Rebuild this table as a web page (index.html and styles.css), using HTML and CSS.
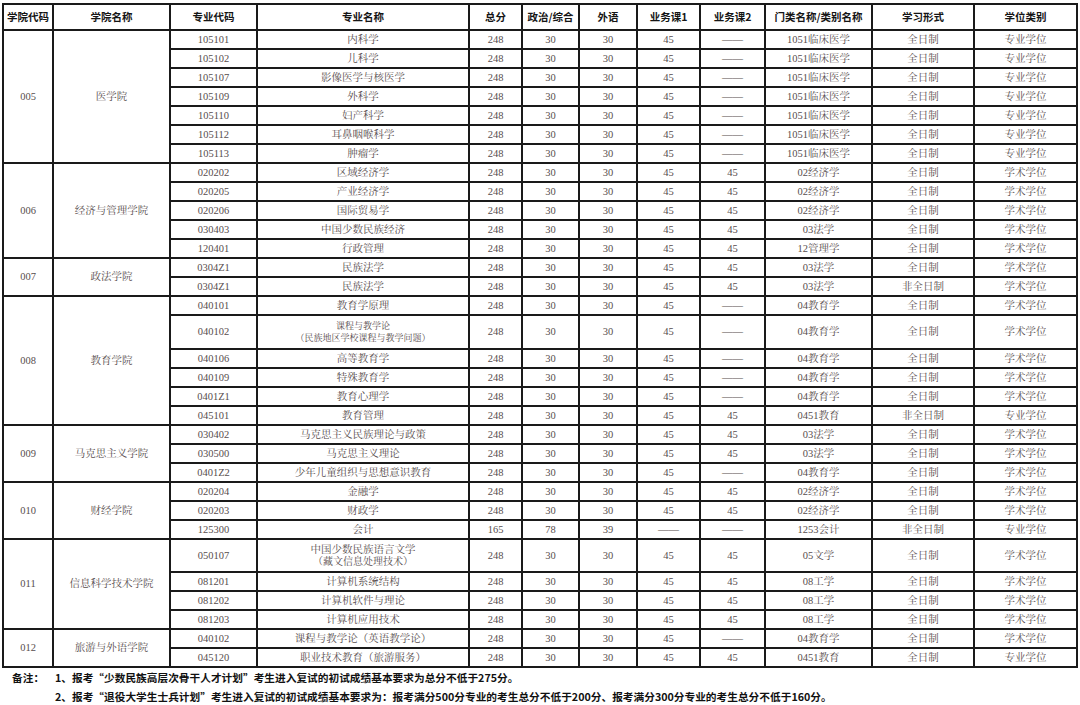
FILE: index.html
```html
<!DOCTYPE html>
<html lang="zh-CN">
<head>
<meta charset="utf-8">
<title>复试基本要求</title>
<link rel="stylesheet" href="styles.css">
</head>
<body>
<div class="page">
<table class="grid">
<colgroup>
<col class="c1"><col class="c2"><col class="c3"><col class="c4"><col class="c5"><col class="c6"><col class="c7"><col class="c8"><col class="c9"><col class="c10"><col class="c11"><col class="c12">
</colgroup>
<thead>
<tr><th>学院代码</th><th>学院名称</th><th>专业代码</th><th>专业名称</th><th>总分</th><th>政治/综合</th><th>外语</th><th>业务课1</th><th>业务课2</th><th>门类名称/类别名称</th><th>学习形式</th><th>学位类别</th></tr>
</thead>
<tbody>
<tr><td rowspan="7">005</td><td rowspan="7">医学院</td><td>105101</td><td>内科学</td><td>248</td><td>30</td><td>30</td><td>45</td><td>——</td><td>1051临床医学</td><td>全日制</td><td>专业学位</td></tr>
<tr><td>105102</td><td>儿科学</td><td>248</td><td>30</td><td>30</td><td>45</td><td>——</td><td>1051临床医学</td><td>全日制</td><td>专业学位</td></tr>
<tr><td>105107</td><td>影像医学与核医学</td><td>248</td><td>30</td><td>30</td><td>45</td><td>——</td><td>1051临床医学</td><td>全日制</td><td>专业学位</td></tr>
<tr><td>105109</td><td>外科学</td><td>248</td><td>30</td><td>30</td><td>45</td><td>——</td><td>1051临床医学</td><td>全日制</td><td>专业学位</td></tr>
<tr><td>105110</td><td>妇产科学</td><td>248</td><td>30</td><td>30</td><td>45</td><td>——</td><td>1051临床医学</td><td>全日制</td><td>专业学位</td></tr>
<tr><td>105112</td><td>耳鼻咽喉科学</td><td>248</td><td>30</td><td>30</td><td>45</td><td>——</td><td>1051临床医学</td><td>全日制</td><td>专业学位</td></tr>
<tr><td>105113</td><td>肿瘤学</td><td>248</td><td>30</td><td>30</td><td>45</td><td>——</td><td>1051临床医学</td><td>全日制</td><td>专业学位</td></tr>

<tr><td rowspan="5">006</td><td rowspan="5">经济与管理学院</td><td>020202</td><td>区域经济学</td><td>248</td><td>30</td><td>30</td><td>45</td><td>45</td><td>02经济学</td><td>全日制</td><td>学术学位</td></tr>
<tr><td>020205</td><td>产业经济学</td><td>248</td><td>30</td><td>30</td><td>45</td><td>45</td><td>02经济学</td><td>全日制</td><td>学术学位</td></tr>
<tr><td>020206</td><td>国际贸易学</td><td>248</td><td>30</td><td>30</td><td>45</td><td>45</td><td>02经济学</td><td>全日制</td><td>学术学位</td></tr>
<tr><td>030403</td><td>中国少数民族经济</td><td>248</td><td>30</td><td>30</td><td>45</td><td>45</td><td>03法学</td><td>全日制</td><td>学术学位</td></tr>
<tr><td>120401</td><td>行政管理</td><td>248</td><td>30</td><td>30</td><td>45</td><td>45</td><td>12管理学</td><td>全日制</td><td>学术学位</td></tr>

<tr><td rowspan="2">007</td><td rowspan="2">政法学院</td><td>0304Z1</td><td>民族法学</td><td>248</td><td>30</td><td>30</td><td>45</td><td>45</td><td>03法学</td><td>全日制</td><td>学术学位</td></tr>
<tr><td>0304Z1</td><td>民族法学</td><td>248</td><td>30</td><td>30</td><td>45</td><td>45</td><td>03法学</td><td>非全日制</td><td>学术学位</td></tr>

<tr><td rowspan="6">008</td><td rowspan="6">教育学院</td><td>040101</td><td>教育学原理</td><td>248</td><td>30</td><td>30</td><td>45</td><td>——</td><td>04教育学</td><td>全日制</td><td>学术学位</td></tr>
<tr class="tall-a"><td>040102</td><td class="small"><span class="line">课程与教学论</span><span class="line">（民族地区学校课程与教学问题）</span></td><td>248</td><td>30</td><td>30</td><td>45</td><td>——</td><td>04教育学</td><td>全日制</td><td>学术学位</td></tr>
<tr><td>040106</td><td>高等教育学</td><td>248</td><td>30</td><td>30</td><td>45</td><td>——</td><td>04教育学</td><td>全日制</td><td>学术学位</td></tr>
<tr><td>040109</td><td>特殊教育学</td><td>248</td><td>30</td><td>30</td><td>45</td><td>——</td><td>04教育学</td><td>全日制</td><td>学术学位</td></tr>
<tr><td>0401Z1</td><td>教育心理学</td><td>248</td><td>30</td><td>30</td><td>45</td><td>——</td><td>04教育学</td><td>全日制</td><td>学术学位</td></tr>
<tr><td>045101</td><td>教育管理</td><td>248</td><td>30</td><td>30</td><td>45</td><td>45</td><td>0451教育</td><td>非全日制</td><td>专业学位</td></tr>

<tr><td rowspan="3">009</td><td rowspan="3">马克思主义学院</td><td>030402</td><td>马克思主义民族理论与政策</td><td>248</td><td>30</td><td>30</td><td>45</td><td>45</td><td>03法学</td><td>全日制</td><td>学术学位</td></tr>
<tr><td>030500</td><td>马克思主义理论</td><td>248</td><td>30</td><td>30</td><td>45</td><td>45</td><td>03法学</td><td>全日制</td><td>学术学位</td></tr>
<tr><td>0401Z2</td><td>少年儿童组织与思想意识教育</td><td>248</td><td>30</td><td>30</td><td>45</td><td>——</td><td>04教育学</td><td>全日制</td><td>学术学位</td></tr>

<tr><td rowspan="3">010</td><td rowspan="3">财经学院</td><td>020204</td><td>金融学</td><td>248</td><td>30</td><td>30</td><td>45</td><td>45</td><td>02经济学</td><td>全日制</td><td>学术学位</td></tr>
<tr><td>020203</td><td>财政学</td><td>248</td><td>30</td><td>30</td><td>45</td><td>45</td><td>02经济学</td><td>全日制</td><td>学术学位</td></tr>
<tr><td>125300</td><td>会计</td><td>165</td><td>78</td><td>39</td><td>——</td><td>——</td><td>1253会计</td><td>非全日制</td><td>专业学位</td></tr>

<tr class="tall-b"><td rowspan="4">011</td><td rowspan="4">信息科学技术学院</td><td>050107</td><td class="two"><span class="line">中国少数民族语言文学</span><span class="line sub">（藏文信息处理技术）</span></td><td>248</td><td>30</td><td>30</td><td>45</td><td>45</td><td>05文学</td><td>全日制</td><td>学术学位</td></tr>
<tr><td>081201</td><td>计算机系统结构</td><td>248</td><td>30</td><td>30</td><td>45</td><td>45</td><td>08工学</td><td>全日制</td><td>学术学位</td></tr>
<tr><td>081202</td><td>计算机软件与理论</td><td>248</td><td>30</td><td>30</td><td>45</td><td>45</td><td>08工学</td><td>全日制</td><td>学术学位</td></tr>
<tr><td>081203</td><td>计算机应用技术</td><td>248</td><td>30</td><td>30</td><td>45</td><td>45</td><td>08工学</td><td>全日制</td><td>学术学位</td></tr>

<tr><td rowspan="2">012</td><td rowspan="2">旅游与外语学院</td><td>040102</td><td>课程与教学论（英语教学论）</td><td>248</td><td>30</td><td>30</td><td>45</td><td>——</td><td>04教育学</td><td>全日制</td><td>学术学位</td></tr>
<tr><td>045120</td><td>职业技术教育（旅游服务）</td><td>248</td><td>30</td><td>30</td><td>45</td><td>45</td><td>0451教育</td><td>全日制</td><td>专业学位</td></tr>
</tbody>
</table>
<div class="notes">
<span class="label">备注：</span>
<span class="text">1、报考“少数民族高层次骨干人才计划”考生进入复试的初试成绩基本要求为总分不低于275分。</span>
<span class="label"></span>
<span class="text">2、报考“退役大学生士兵计划”考生进入复试的初试成绩基本要求为：报考满分500分专业的考生总分不低于200分、报考满分300分专业的考生总分不低于160分。</span>
</div>
</div>
</body>
</html>
```

FILE: styles.css
```css
html, body {
  margin: 0;
  padding: 0;
  background: #ffffff;
}

body {
  font-family: "Liberation Serif", "Noto Serif CJK SC", "Noto Sans CJK SC", serif;
  font-size: 10.5px;
  color: #574d4d;
}

.page {
  padding: 3px 0 0 2px;
}

.grid {
  border-collapse: collapse;
  table-layout: fixed;
  width: 1076px;
  border: 2px solid #1a1a1a;
}

.c1 { width: 50px; }
.c2 { width: 117px; }
.c3 { width: 87px; }
.c4 { width: 212px; }
.c5 { width: 53px; }
.c6 { width: 57px; }
.c7 { width: 58px; }
.c8 { width: 63px; }
.c9 { width: 65px; }
.c10 { width: 107px; }
.c11 { width: 102px; }
.c12 { width: 103px; }

.grid th,
.grid td {
  border: 2px solid #1a1a1a;
  padding: 0;
  text-align: center;
  vertical-align: middle;
  line-height: 12px;
  white-space: nowrap;
  overflow: hidden;
}

.grid th {
  font-family: "Noto Sans CJK SC", sans-serif;
  font-weight: 700;
  font-size: 10.5px;
  color: #151515;
}

.grid thead tr {
  height: 26px;
}

.grid tbody tr {
  height: 19px;
}

.grid tbody tr.tall-a {
  height: 34px;
}

.grid tbody tr.tall-b {
  height: 33px;
}

.line {
  display: block;
}

.small {
  font-size: 9px;
  line-height: 13px;
}

.two {
  line-height: 12.5px;
}

.two .sub {
  font-size: 10px;
}

.notes {
  display: grid;
  grid-template-columns: 43px auto;
  padding-left: 10px;
  font-family: "Noto Sans CJK SC", sans-serif;
  font-weight: 700;
  font-size: 10.7px;
  line-height: 19px;
  color: #111111;
}
```
